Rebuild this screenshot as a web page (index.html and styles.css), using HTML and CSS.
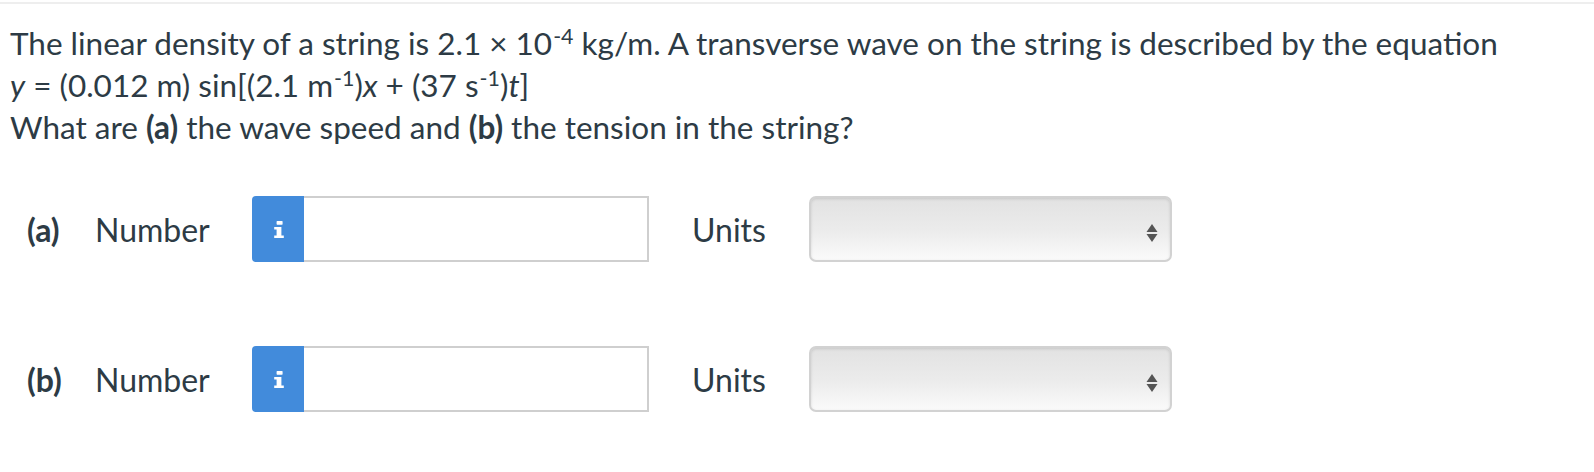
FILE: index.html
```html
<!DOCTYPE html>
<html>
<head>
<meta charset="utf-8">
<link rel="stylesheet" href="styles.css">
</head>
<body>
<div class="page">
  <div class="question">
    <p class="line">The linear density of a string is 2.1 × 10<sup class="sup">-4</sup> kg/m. A transverse wave on the string is described by the equation</p>
    <p class="line"><i>y</i> = (0.012 m) sin[(2.1 m<sup class="sup">-1</sup>)<i>x</i> + (37 s<sup class="sup">-1</sup>)<i>t</i>]</p>
    <p class="line">What are <b>(a)</b> the wave speed and <b>(b)</b> the tension in the string?</p>
  </div>
  <div class="answers">
    <div class="row">
      <span class="part">(a)</span>
      <span class="label">Number</span>
      <span class="info"><svg width="12" height="17" viewBox="0 0 10 14"><rect x="3" y="0" width="5" height="3" rx="0.5" fill="#fff"/><path d="M1 5H7V12H9V14H1V12H3V7H1Z" fill="#fff"/></svg></span>
      <span class="input"></span>
      <span class="units">Units</span>
      <span class="select"><svg width="12" height="18" viewBox="0 0 12 18"><path d="M6 0L11.5 8H0.5Z" fill="#555"/><path d="M0.5 10H11.5L6 18Z" fill="#555"/></svg></span>
    </div>
    <div class="row">
      <span class="part">(b)</span>
      <span class="label">Number</span>
      <span class="info"><svg width="12" height="17" viewBox="0 0 10 14"><rect x="3" y="0" width="5" height="3" rx="0.5" fill="#fff"/><path d="M1 5H7V12H9V14H1V12H3V7H1Z" fill="#fff"/></svg></span>
      <span class="input"></span>
      <span class="units">Units</span>
      <span class="select"><svg width="12" height="18" viewBox="0 0 12 18"><path d="M6 0L11.5 8H0.5Z" fill="#555"/><path d="M0.5 10H11.5L6 18Z" fill="#555"/></svg></span>
    </div>
  </div>
</div>
</body>
</html>
```
FILE: styles.css
```css
html, body {
  margin: 0;
  padding: 0;
  background: #fff;
}
.page {
  margin-top: 2px;
  border-top: 2px solid #eeeeee;
  font-family: Lato, "Open Sans", sans-serif;
  font-size: 31.5px;
  color: #2d3b45;
}
.question {
  padding: 18px 0 0 10px;
}
.line {
  margin: 0;
  line-height: 42px;
  white-space: nowrap;
}
.sup {
  font-size: 0.68em;
  line-height: 0;
  vertical-align: 0.5em;
  margin-left: 1px;
}
.answers {
  padding: 48px 0 0 27px;
  display: flex;
  flex-direction: column;
  gap: 84px;
  font-size: 32px;
}
.row {
  display: flex;
  align-items: center;
  height: 66px;
}
.part {
  width: 68px;
  font-weight: 700;
}
.label {
  width: 157px;
}
.info {
  width: 52px;
  height: 66px;
  box-sizing: border-box;
  background: #428bdb;
  border-radius: 4px 0 0 4px;
  display: flex;
  align-items: center;
  justify-content: center;
}
.info svg {
  margin-left: 2px;
}
.input {
  width: 345px;
  height: 66px;
  box-sizing: border-box;
  border: 2px solid #cfcfcf;
  border-left: none;
  background: #fff;
}
.units {
  margin-left: 43px;
  width: 117px;
}
.select {
  width: 363px;
  height: 66px;
  box-sizing: border-box;
  border: 2px solid #d2d2d2;
  border-radius: 7px;
  background: linear-gradient(#e2e2e2, #ececec 55%, #fafafa);
  box-shadow: inset 0 1px 3px rgba(0,0,0,0.12);
  display: flex;
  align-items: center;
  justify-content: flex-end;
  padding-right: 12px;
}
.select svg {
  margin-top: 8px;
}
```
